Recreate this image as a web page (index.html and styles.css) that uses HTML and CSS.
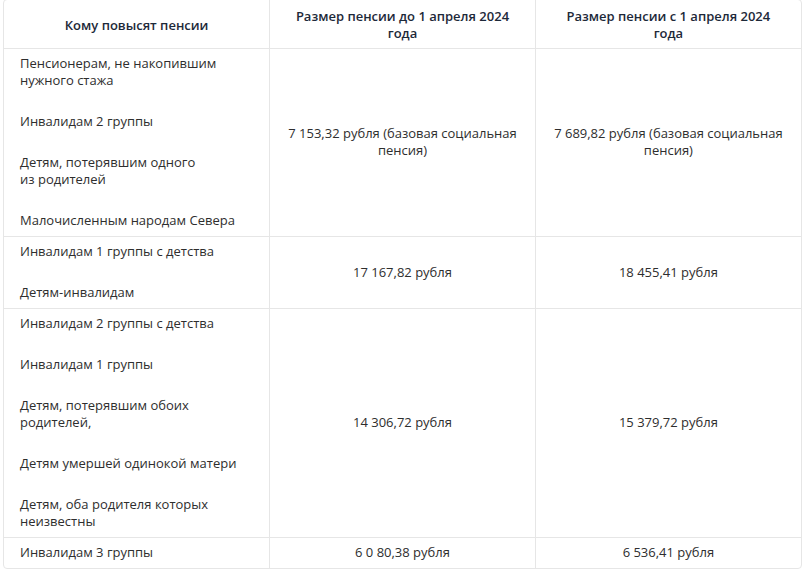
FILE: index.html
```html
<!DOCTYPE html>
<html lang="ru">
<head>
<meta charset="utf-8">
<title>Пенсии</title>
<link rel="stylesheet" href="styles.css">
</head>
<body>
<div class="table-wrap">
  <table class="pension-table">
    <thead>
      <tr>
        <th>Кому повысят пенсии</th>
        <th>Размер пенсии до 1 апреля 2024 года</th>
        <th>Размер пенсии с 1 апреля 2024 года</th>
      </tr>
    </thead>
    <tbody>
      <tr>
        <td class="who">
          <p>Пенсионерам, не накопившим нужного стажа</p>
          <p>Инвалидам 2 группы</p>
          <p>Детям, потерявшим одного<br>из родителей</p>
          <p>Малочисленным народам Севера</p>
        </td>
        <td class="sum">7 153,32 рубля (базовая социальная пенсия)</td>
        <td class="sum">7 689,82 рубля (базовая социальная пенсия)</td>
      </tr>
      <tr>
        <td class="who">
          <p>Инвалидам 1 группы с детства</p>
          <p>Детям-инвалидам</p>
        </td>
        <td class="sum">17 167,82 рубля</td>
        <td class="sum">18 455,41 рубля</td>
      </tr>
      <tr>
        <td class="who">
          <p>Инвалидам 2 группы с детства</p>
          <p>Инвалидам 1 группы</p>
          <p>Детям, потерявшим обоих родителей,</p>
          <p>Детям умершей одинокой матери</p>
          <p>Детям, оба родителя которых неизвестны</p>
        </td>
        <td class="sum">14 306,72 рубля</td>
        <td class="sum">15 379,72 рубля</td>
      </tr>
      <tr>
        <td class="who">
          <p>Инвалидам 3 группы</p>
        </td>
        <td class="sum">6 0 80,38 рубля</td>
        <td class="sum">6 536,41 рубля</td>
      </tr>
    </tbody>
  </table>
</div>
</body>
</html>
```

FILE: styles.css
```css
html, body {
  margin: 0;
  padding: 0;
  background: #ffffff;
}

body {
  font-family: "Open Sans", "Noto Sans", "Liberation Sans", sans-serif;
  font-size: 13px;
  line-height: 17px;
  color: #2e2e2e;
}

.table-wrap {
  margin: -1px 1px 0 3px;
  border: 1px solid #e6e6e6;
  border-radius: 4px;
  overflow: hidden;
}

.pension-table {
  width: 100%;
  border-collapse: collapse;
  table-layout: fixed;
}

.pension-table th,
.pension-table td {
  border-left: 1px solid #e6e6e6;
  border-top: 1px solid #e6e6e6;
  vertical-align: middle;
}

.pension-table th:first-child,
.pension-table td:first-child {
  border-left: none;
}

.pension-table thead th {
  border-top: none;
  padding: 8px 16px 6px;
  font-weight: 600;
  color: #1d2939;
  text-align: center;
}

.pension-table td {
  padding: 6px 16px 7px;
}

.who {
  text-align: left;
}

.who p {
  margin: 0 0 24px;
}

.who p:last-child {
  margin-bottom: 0;
}

.sum {
  text-align: center;
}
```
